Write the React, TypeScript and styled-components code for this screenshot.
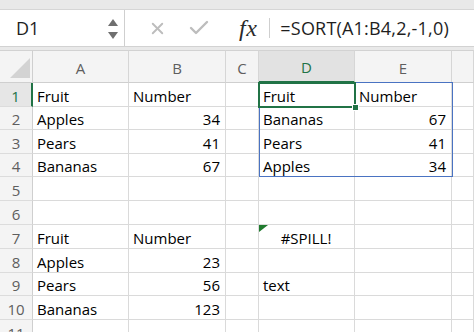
import styled, { createGlobalStyle } from 'styled-components';
import { X, Check } from 'lucide-react';

const GlobalStyle = createGlobalStyle`
   html, body {
      margin: 0;
      padding: 0;
      background: #ffffff;
      font-family: 'Open Sans', 'Liberation Sans', sans-serif;
   }
   * {
      box-sizing: border-box;
   }
`;

type Align = 'left' | 'right' | 'center';

type CellData = {
   v: string;
   align?: Align;
   error?: boolean;
};

const columns = ['A', 'B', 'C', 'D', 'E', ''];
const rowHeights = [24, 23, 24, 23, 24, 24, 24, 24, 23, 24, 24];

const t = (v: string): CellData => ({ v, align: 'left' });
const n = (v: string): CellData => ({ v, align: 'right' });
const empty: CellData = { v: '' };

const sheet: CellData[][] = [
   [t('Fruit'), t('Number'), empty, t('Fruit'), t('Number'), empty],
   [t('Apples'), n('34'), empty, t('Bananas'), n('67'), empty],
   [t('Pears'), n('41'), empty, t('Pears'), n('41'), empty],
   [t('Bananas'), n('67'), empty, t('Apples'), n('34'), empty],
   [empty, empty, empty, empty, empty, empty],
   [empty, empty, empty, empty, empty, empty],
   [t('Fruit'), t('Number'), empty, { v: '#SPILL!', align: 'center', error: true }, empty, empty],
   [t('Apples'), n('23'), empty, empty, empty, empty],
   [t('Pears'), n('56'), empty, t('text'), empty, empty],
   [t('Bananas'), n('123'), empty, empty, empty, empty],
   [empty, empty, empty, empty, empty, empty]
];

const Window = styled.div`
   width: 474px;
   height: 332px;
   overflow: hidden;
   background: #e9e9e9;
   padding-top: 9px;
   display: flex;
   flex-direction: column;
`;

const FormulaBar = styled.div`
   flex-shrink: 0;
   display: flex;
   height: 38px;
   background: #ffffff;
   border-top: 1px solid #d6d6d6;
   border-bottom: 1px solid #d2d2d2;
   margin-bottom: 3px;
`;

const NameBox = styled.div`
   width: 125px;
   display: flex;
   align-items: center;
   justify-content: space-between;
   padding: 0 6px 0 16px;
   border-right: 1px solid #cfcfcf;
   font-size: 18px;
   color: #1e1e1e;
`;

const Spinner = styled.div`
   display: flex;
   flex-direction: column;
   gap: 6px;
   padding-top: 2px;
`;

const Arrow = styled.div<{ $down?: boolean }>`
   width: 0;
   height: 0;
   border-left: 5px solid transparent;
   border-right: 5px solid transparent;
   ${(p) => (p.$down ? 'border-top: 7px solid #6f6f6f;' : 'border-bottom: 7px solid #6f6f6f;')}
`;

const FormulaArea = styled.div`
   flex: 1;
   display: flex;
   align-items: center;
   padding-left: 21px;
`;

const ToolButton = styled.div<{ $w: number }>`
   width: ${(p) => p.$w}px;
   display: flex;
   align-items: center;
   justify-content: center;
   color: #bdbdbd;
`;

const Fx = styled.span`
   font-family: 'Liberation Serif', 'DejaVu Serif', serif;
   font-style: italic;
   font-size: 24px;
   color: #2a2a2a;
   margin-left: 9px;
   letter-spacing: 0.5px;
`;

const Divider = styled.div`
   width: 1px;
   height: 20px;
   background: #cfcfcf;
   margin: 0 10px 0 12px;
`;

const FormulaText = styled.span`
   font-size: 18px;
   color: #1e1e1e;
   white-space: nowrap;
   letter-spacing: 0.2px;
`;

const SheetWrap = styled.div`
   position: relative;
   flex: 1;
   min-height: 0;
   background: #ffffff;
`;

const Grid = styled.div`
   display: grid;
   grid-template-columns: 33px 96px 97px 33px 96px 97px 1fr;
   grid-template-rows: 33px ${rowHeights.map((h) => `${h}px`).join(' ')};
   font-size: 15px;
`;

const Corner = styled.div`
   background: #f4f4f4;
   border-top: 1px solid #d2d2d2;
   border-right: 1px solid #cfcfcf;
   border-bottom: 1px solid #cfcfcf;
   display: flex;
   align-items: flex-end;
   justify-content: flex-end;
   padding: 0 2px 4px 0;
`;

const CornerTriangle = styled.div`
   width: 0;
   height: 0;
   border-left: 20px solid transparent;
   border-bottom: 20px solid #d3d3d3;
`;

const ColHeader = styled.div<{ $active?: boolean }>`
   background: ${(p) => (p.$active ? '#e2e2e2' : '#f4f4f4')};
   border-top: 1px solid #d2d2d2;
   border-right: 1px solid #d6d6d6;
   border-bottom: ${(p) => (p.$active ? '2px solid #217346' : '1px solid #cfcfcf')};
   color: ${(p) => (p.$active ? '#217346' : '#5e5e5e')};
   display: flex;
   align-items: center;
   justify-content: center;
   padding-top: 2px;
`;

const RowHeader = styled.div<{ $active?: boolean }>`
   background: ${(p) => (p.$active ? '#e6e6e6' : '#f4f4f4')};
   border-right: ${(p) => (p.$active ? '2px solid #217346' : '1px solid #cfcfcf')};
   border-bottom: 1px solid #dcdcdc;
   color: ${(p) => (p.$active ? '#217346' : '#5e5e5e')};
   display: flex;
   align-items: center;
   justify-content: center;
   padding-top: 2px;
`;

const Cell = styled.div<{ $align: Align }>`
   position: relative;
   border-right: 1px solid #dadada;
   border-bottom: 1px solid #dadada;
   display: flex;
   align-items: center;
   justify-content: ${(p) =>
      p.$align === 'right' ? 'flex-end' : p.$align === 'center' ? 'center' : 'flex-start'};
   padding: 2px 5px 0 4px;
   color: #000000;
   white-space: nowrap;
   overflow: visible;
`;

const ErrorFlag = styled.div`
   position: absolute;
   top: 0;
   left: 0;
   width: 0;
   height: 0;
   border-top: 7px solid #1f7a2e;
   border-right: 9px solid transparent;
`;

const SpillRange = styled.div`
   position: absolute;
   left: 259px;
   top: 32px;
   width: 194px;
   height: 95px;
   border: 1.5px solid #4a73c2;
   pointer-events: none;
`;

const Selection = styled.div`
   position: absolute;
   left: 258px;
   top: 32px;
   width: 98px;
   height: 26px;
   border: 2px solid #217346;
   pointer-events: none;
`;

const FillHandle = styled.div`
   position: absolute;
   right: -5px;
   bottom: -5px;
   width: 7px;
   height: 7px;
   background: #217346;
   border: 1px solid #ffffff;
`;

export default function App() {
   return (
      <>
         <GlobalStyle />
         <Window>
            <FormulaBar>
               <NameBox>
                  <span>D1</span>
                  <Spinner>
                     <Arrow />
                     <Arrow $down />
                  </Spinner>
               </NameBox>
               <FormulaArea>
                  <ToolButton $w={22}>
                     <X size={19} strokeWidth={2.4} />
                  </ToolButton>
                  <ToolButton $w={62}>
                     <Check size={24} strokeWidth={2.4} />
                  </ToolButton>
                  <Fx>fx</Fx>
                  <Divider />
                  <FormulaText>=SORT(A1:B4,2,-1,0)</FormulaText>
               </FormulaArea>
            </FormulaBar>
            <SheetWrap>
               <Grid>
                  <Corner>
                     <CornerTriangle />
                  </Corner>
                  {columns.map((c, i) => (
                     <ColHeader key={`h${i}`} $active={c === 'D'}>
                        {c}
                     </ColHeader>
                  ))}
                  {sheet.map((row, r) => (
                     <RowFragment key={r} index={r} row={row} />
                  ))}
               </Grid>
               <SpillRange />
               <Selection>
                  <FillHandle />
               </Selection>
            </SheetWrap>
         </Window>
      </>
   );
}

const RowFragment = ({ index, row }: { index: number; row: CellData[] }) => (
   <>
      <RowHeader $active={index === 0}>{index + 1}</RowHeader>
      {row.map((cell, c) => (
         <Cell key={c} $align={cell.align ?? 'left'}>
            {cell.error && <ErrorFlag />}
            {cell.v}
         </Cell>
      ))}
   </>
);
